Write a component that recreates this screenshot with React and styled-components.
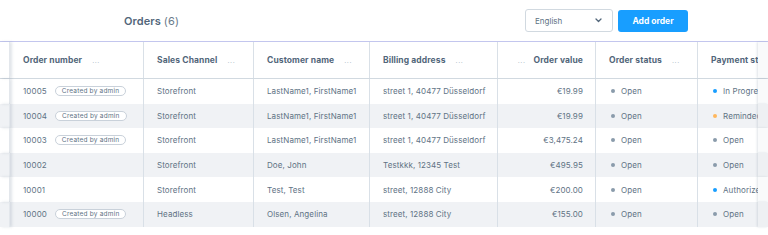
import React from "react";
import styled, { createGlobalStyle } from "styled-components";

const Global = createGlobalStyle`
  html, body { margin: 0; padding: 0; background: #fff; }
  body { font-family: Inter, "Noto Sans", sans-serif; color: #52667a; }
  * { box-sizing: border-box; }
`;

const Page = styled.div`
  width: 768px;
  height: 235px;
  overflow: hidden;
  background: #fff;
`;

const TopBar = styled.div`
  height: 41px;
  display: flex;
  align-items: center;
  padding: 0 80px 0 124px;
`;

const Title = styled.h1`
  margin: 0;
  font-size: 11px;
  font-weight: 600;
  color: #52667a;
  letter-spacing: 0.1px;
`;

const Count = styled.span`
  font-weight: 400;
  color: #6a7b8c;
`;

const Actions = styled.div`
  margin-left: auto;
  display: flex;
  align-items: center;
  gap: 5px;
`;

const Select = styled.div`
  width: 88px;
  height: 23px;
  border: 1px solid #d1d9e0;
  border-radius: 3px;
  display: flex;
  align-items: center;
  justify-content: space-between;
  padding: 0 10px 0 9px;
  font-size: 8px;
  color: #607284;
`;

const Button = styled.button`
  width: 70px;
  height: 22px;
  border: 0;
  border-radius: 3px;
  background: #189eff;
  color: #fff;
  font-family: inherit;
  font-size: 8.5px;
  font-weight: 700;
  cursor: pointer;
`;

const Table = styled.div`
  border-top: 1px solid #c3c6ee;
`;

const columns = "10px 134px 110px 116px 128px 98px 102px 1fr 10px";

const Row = styled.div`
  display: grid;
  grid-template-columns: ${columns};
  height: ${(p) => (p.$head ? "37px" : "24.6px")};
  background: ${(p) => (p.$shaded ? "#f0f2f5" : "#fff")};
  border-bottom: ${(p) => (p.$head ? "1px solid #d1d9e0" : "0")};
`;

const Cell = styled.div`
  display: flex;
  align-items: center;
  justify-content: ${(p) => (p.$right ? "flex-end" : "flex-start")};
  padding: 0 12px 0 13px;
  border-right: 1px solid #d9e0e7;
  white-space: nowrap;
  overflow: hidden;
  font-size: ${(p) => (p.$head ? "8.5px" : "8px")};
  font-weight: ${(p) => (p.$head ? 700 : 400)};
  color: ${(p) => (p.$head ? "#52667a" : "#607284")};
  letter-spacing: 0.1px;
`;

const Clip = styled.div`
  display: flex;
  align-items: center;
  padding-left: 13px;
  white-space: nowrap;
  overflow: hidden;
  font-size: ${(p) => (p.$head ? "8.5px" : "8px")};
  font-weight: ${(p) => (p.$head ? 700 : 400)};
  color: ${(p) => (p.$head ? "#52667a" : "#607284")};
  letter-spacing: 0.1px;
`;

const StickyLeft = styled.div`
  border-right: 1px solid #e3e7ec;
  box-shadow: 2px 0 3px rgba(120, 138, 155, 0.22);
  position: relative;
  z-index: 1;
`;

const StickyRight = styled.div`
  background: ${(p) => (p.$shaded ? "#eef0f3" : "#f9fafb")};
  box-shadow: -1px 0 2px rgba(120, 138, 155, 0.22);
  position: relative;
  z-index: 1;
`;

const Dots = styled.span`
  color: #b3bfcb;
  font-weight: 400;
  font-size: 7px;
  letter-spacing: 0.6px;
  margin: ${(p) => (p.$before ? "0 8px 0 0" : "0 0 0 10px")};
`;

const Badge = styled.span`
  display: inline-flex;
  align-items: center;
  height: 10px;
  padding: 0 6px;
  margin-left: 8px;
  border: 1px solid #c9d1da;
  border-radius: 6px;
  font-size: 6.5px;
  letter-spacing: 0.2px;
  color: #607284;
  background: #fff;
`;

const Dot = styled.span`
  width: 4px;
  height: 4px;
  border-radius: 50%;
  background: ${(p) => p.$color};
  margin: 0 6px 0 2px;
  flex-shrink: 0;
`;

const dotColors = {
  Open: "#8a9bab",
  "In Progress": "#189eff",
  Reminded: "#ffb75d",
  Authorized: "#189eff",
};

const orders = [
  { no: "10005", badge: true, channel: "Storefront", customer: "LastName1, FirstName1", address: "street 1, 40477 Düsseldorf", value: "€19.99", status: "Open", payment: "In Progress" },
  { no: "10004", badge: true, channel: "Storefront", customer: "LastName1, FirstName1", address: "street 1, 40477 Düsseldorf", value: "€19.99", status: "Open", payment: "Reminded" },
  { no: "10003", badge: true, channel: "Storefront", customer: "LastName1, FirstName1", address: "street 1, 40477 Düsseldorf", value: "€3,475.24", status: "Open", payment: "Open" },
  { no: "10002", badge: false, channel: "Storefront", customer: "Doe, John", address: "Testkkk, 12345 Test", value: "€495.95", status: "Open", payment: "Open" },
  { no: "10001", badge: false, channel: "Storefront", customer: "Test, Test", address: "street, 12888 City", value: "€200.00", status: "Open", payment: "Authorized" },
  { no: "10000", badge: true, channel: "Headless", customer: "Olsen, Angelina", address: "street, 12888 City", value: "€155.00", status: "Open", payment: "Open" },
];

function Chevron() {
  return (
    <svg width="7" height="5" viewBox="0 0 7 5">
      <path d="M1 1 L3.5 3.5 L6 1" fill="none" stroke="#52667a" strokeWidth="1.3" strokeLinecap="round" strokeLinejoin="round" />
    </svg>
  );
}

export default function App() {
  return (
    <Page>
      <Global />
      <TopBar>
        <Title>
          Orders <Count>(6)</Count>
        </Title>
        <Actions>
          <Select>
            <span>English</span>
            <Chevron />
          </Select>
          <Button>Add order</Button>
        </Actions>
      </TopBar>
      <Table>
        <Row $head>
          <StickyLeft />
          <Cell $head>Order number<Dots>...</Dots></Cell>
          <Cell $head>Sales Channel<Dots>...</Dots></Cell>
          <Cell $head>Customer name<Dots>...</Dots></Cell>
          <Cell $head>Billing address<Dots>...</Dots></Cell>
          <Cell $head $right><Dots $before>...</Dots>Order value</Cell>
          <Cell $head>Order status<Dots>...</Dots></Cell>
          <Clip $head>Payment status</Clip>
          <StickyRight />
        </Row>
        {orders.map((o, i) => (
          <Row key={o.no} $shaded={i % 2 === 1}>
            <StickyLeft />
            <Cell>
              {o.no}
              {o.badge && <Badge>Created by admin</Badge>}
            </Cell>
            <Cell>{o.channel}</Cell>
            <Cell>{o.customer}</Cell>
            <Cell>{o.address}</Cell>
            <Cell $right>{o.value}</Cell>
            <Cell>
              <Dot $color={dotColors[o.status]} />
              {o.status}
            </Cell>
            <Clip>
              <Dot $color={dotColors[o.payment]} />
              {o.payment}
            </Clip>
            <StickyRight $shaded={i % 2 === 1} />
          </Row>
        ))}
      </Table>
    </Page>
  );
}
